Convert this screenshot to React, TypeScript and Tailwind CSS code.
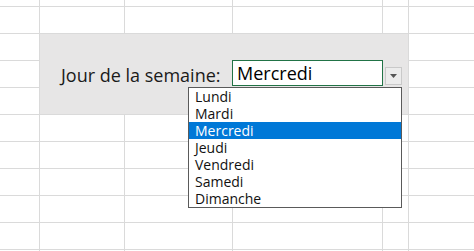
import React from "react";

const days = ["Lundi", "Mardi", "Mercredi", "Jeudi", "Vendredi", "Samedi", "Dimanche"];

export default function App() {
  const cols = 6;
  const rows = 11;
  const cells: JSX.Element[] = [];
  for (let r = 0; r < rows; r++) {
    for (let c = 0; c < cols; c++) {
      const inGrey = r >= 2 && r <= 4 && c >= 1 && c <= 4;
      if (inGrey) continue;
      cells.push(<div key={`${r}-${c}`} className="bg-white" style={{ gridRow: r + 1, gridColumn: c + 1 }} />);
    }
  }
  return (
    <div className="w-[474px] h-[251px] overflow-hidden bg-white" style={{ fontFamily: '"Open Sans", "Noto Sans", sans-serif' }}>
      <div className="grid gap-px bg-[#dadada] w-[474px] h-[260px] grid-cols-[39px_84px_107px_149px_25px_1fr] grid-rows-[6px_26px_26px_26px_26px_26px_26px_26px_26px_26px_26px]">
        {cells}
        <div className="relative bg-[#e7e6e6] col-start-2 col-end-6 row-start-3 row-end-6 flex pt-[26px] pl-[21px]">
          <div className="w-[171px] text-[18px] leading-[26px] text-[#1a1a1a] pt-[2px]">Jour de la semaine:</div>
          <div className="relative flex items-start">
            <div className="w-[151px] h-[26px] bg-white border border-[#217346] text-[18px] leading-[24px] pl-[4px] text-black">Mercredi</div>
            <div className="ml-[2px] mt-[7px] w-[17px] h-[18px] bg-[#ececec] border border-[#c9c9c9] flex items-center justify-center">
              <svg width="7" height="4" viewBox="0 0 7 4"><path d="M0 0h7L3.5 4z" fill="#555" /></svg>
            </div>
            <div className="absolute top-[27px] left-[-44px] w-[214px] h-[121px] bg-white border border-[#5a5a5a] z-10">
              {days.map((d) => (
                <div
                  key={d}
                  className={`h-[17px] pl-[6px] text-[14px] leading-[17px] ${d === "Mercredi" ? "bg-[#0078d7] text-white" : "text-[#111]"}`}
                >
                  {d}
                </div>
              ))}
            </div>
          </div>
        </div>
      </div>
    </div>
  );
}
